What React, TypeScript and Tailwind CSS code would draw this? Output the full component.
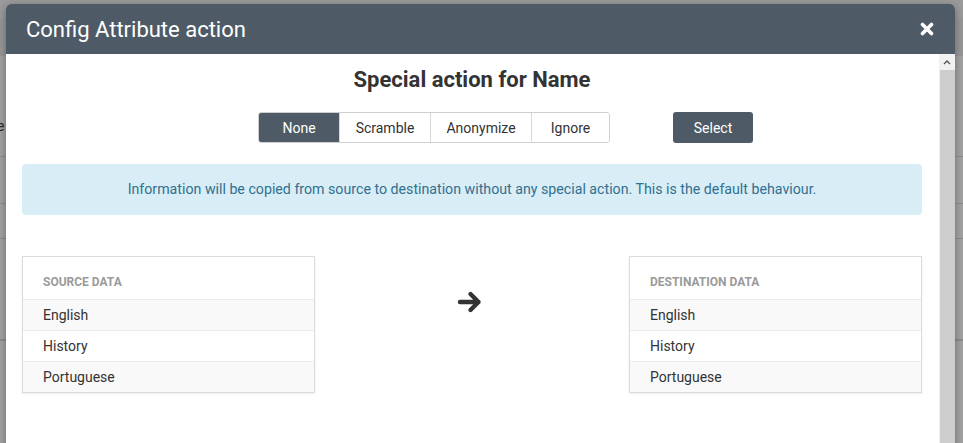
import React from "react";

const font = { fontFamily: "Roboto, 'Liberation Sans', Arial, sans-serif" };

function DataTable({ title }: { title: string }) {
  const rows = ["English", "History", "Portuguese"];
  return (
    <div className="w-[293px] border border-[#dcdcdc] bg-white shadow-[0_1px_2px_rgba(0,0,0,0.08)]">
      <div className="h-[42px] flex items-center pt-[7px] pl-[20px] text-[12px] font-bold text-[#9a9a9a] uppercase">
        {title}
      </div>
      {rows.map((r, i) => (
        <div
          key={r}
          className={
            "h-[31px] flex items-center pl-[20px] border-t border-[#ebebeb] text-[14px] text-[#333] " +
            (i % 2 === 0 ? "bg-[#f9f9f9]" : "bg-white")
          }
        >
          {r}
        </div>
      ))}
    </div>
  );
}

export default function App() {
  const opts = [
    { label: "None", w: "w-[80px]", active: true },
    { label: "Scramble", w: "w-[91px]", active: false },
    { label: "Anonymize", w: "w-[101px]", active: false },
    { label: "Ignore", w: "w-[78px]", active: false },
  ];
  return (
    <div className="relative w-[963px] h-[443px] overflow-hidden bg-[#a2a2a2]" style={font}>
      {/* underlying page seen through overlay */}
      <div className="flex flex-col">
        <div className="h-[18px] bg-[#9b9b9b]" />
        <div className="h-[38px] bg-[#979797]" />
        <div className="h-[100px] flex items-start pt-[62px]">
          <span className="text-[14px] leading-[16px] text-[#2a2a2a] -ml-[3px]">e</span>
        </div>
        <div className="h-px bg-[#8c8c8c]" />
        <div className="h-[46px]" />
        <div className="h-px bg-[#8c8c8c]" />
        <div className="h-[34px]" />
        <div className="h-px bg-[#8c8c8c]" />
        <div className="h-[100px]" />
        <div className="h-[2px] bg-[#8c8c8c]" />
      </div>

      {/* modal */}
      <div className="absolute left-[6px] top-[4px] w-[949px] h-[470px] rounded-t-[5px] overflow-hidden shadow-[0_2px_8px_rgba(0,0,0,0.35)] flex flex-col bg-white">
        <div className="h-[50px] shrink-0 bg-[#4e5b66] flex items-center justify-between pl-[20px] pr-[21px]">
          <span className="text-[22px] leading-[26px] text-white pt-[2px]">Config Attribute action</span>
          <svg width="14" height="14" viewBox="0 0 14 14">
            <path d="M2.5 2.5 L11.5 11.5 M11.5 2.5 L2.5 11.5" stroke="#fff" strokeWidth="3.6" strokeLinecap="round" />
          </svg>
        </div>
        <div className="flex flex-1">
          <div className="flex-1 pl-[16px] pr-[17px] pt-[14px]">
            <h2 className="text-[22px] leading-[24px] font-bold text-[#333] text-center">
              Special action for Name
            </h2>
            <div className="mt-[20px] flex items-center pl-[236px]">
              <div className="flex h-[31px] rounded-[3px] border border-[#cfcfcf] overflow-hidden">
                {opts.map((o, i) => (
                  <div
                    key={o.label}
                    className={
                      o.w +
                      " flex items-center justify-center pt-[1px] text-[14px] " +
                      (i > 0 ? "border-l border-[#d8d8d8] " : "") +
                      (o.active ? "bg-[#4e5b66] text-white" : "bg-white text-[#333]")
                    }
                  >
                    {o.label}
                  </div>
                ))}
              </div>
              <div className="ml-[63px] w-[80px] h-[31px] rounded-[3px] bg-[#4e5b66] text-white text-[14px] pt-[2px] flex items-center justify-center">
                Select
              </div>
            </div>
            <div className="mt-[21px] h-[51px] rounded-[4px] bg-[#d9edf7] text-[#31708f] text-[14.2px] flex items-center justify-center">
              Information will be copied from source to destination without any special action. This is the default behaviour.
            </div>
            <div className="mt-[41px] flex justify-between items-start">
              <DataTable title="Source Data" />
              <div className="pt-[34px] pr-[4px]">
                <svg width="26" height="24" viewBox="0 0 26 24">
                  <path d="M3 12 H21.5 M13.5 4 L21.5 12 L13.5 20" fill="none" stroke="#333" strokeWidth="4.4" strokeLinecap="round" strokeLinejoin="round" />
                </svg>
              </div>
              <DataTable title="Destination Data" />
            </div>
          </div>
          <div className="w-[16px] shrink-0 bg-[#f1f1f1] flex flex-col items-center">
            <div className="h-[16px] flex items-center justify-center">
              <svg width="8" height="6" viewBox="0 0 8 6">
                <path d="M1 5 L4 2 L7 5" fill="none" stroke="#555" strokeWidth="1.4" />
              </svg>
            </div>
            <div className="w-[15px] flex-1 bg-[#cdcdcd]" />
          </div>
        </div>
      </div>
    </div>
  );
}
